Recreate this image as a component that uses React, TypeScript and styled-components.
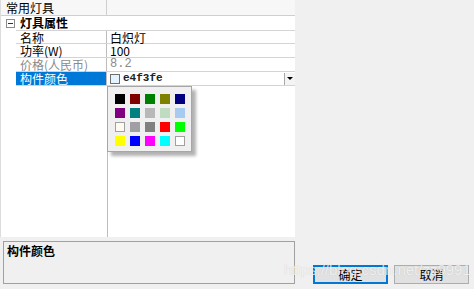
import React from "react";
import styled, { createGlobalStyle } from "styled-components";

const Global = createGlobalStyle`
  html, body { margin: 0; padding: 0; background: #f0f0f0; }
  body { font-family: "Noto Sans CJK SC", "Liberation Sans", sans-serif; font-size: 12px; color: #000; }
`;

const Page = styled.div`
  position: relative;
  width: 474px;
  height: 289px;
  display: flex;
  background: #f0f0f0;
  overflow: hidden;
`;

const LeftColumn = styled.div`
  width: 295px;
  display: flex;
  flex-direction: column;
`;

const Grid = styled.div`
  position: relative;
  height: 237px;
  background: #fff;
  border-left: 1px solid #dcdcdc;
  box-sizing: border-box;
  display: flex;
  flex-direction: column;
`;

const Header = styled.div`
  height: 15px;
  display: flex;
  background: #f7f7f7;
  border-bottom: 1px solid #cfcfcf;
  line-height: 15px;
`;

const HeaderLabel = styled.div`
  width: 106px;
  padding-left: 5px;
  box-sizing: border-box;
  border-right: 1px solid #cfcfcf;
`;

const CategoryRow = styled.div`
  height: 14px;
  display: flex;
  align-items: center;
  font-weight: bold;
  line-height: 14px;
`;

const Toggle = styled.span`
  position: relative;
  box-sizing: border-box;
  width: 9px;
  height: 9px;
  margin: 0 5px 0 5px;
  border: 1px solid #8c8c8c;
  background: #fff;
  &::after {
    content: "";
    position: absolute;
    left: 1px;
    right: 1px;
    top: 3px;
    height: 1px;
    background: #333;
  }
`;

const Row = styled.div`
  height: 14px;
  display: flex;
`;

const Gutter = styled.div`
  width: 15px;
  flex: none;
`;

const Cells = styled.div<{ first?: boolean }>`
  flex: 1;
  display: flex;
  border-bottom: 1px solid #d4d4d4;
  box-sizing: border-box;
  border-top: ${(p) => (p.first ? "1px solid #d4d4d4" : "none")};
`;

const Label = styled.div<{ selected?: boolean; disabled?: boolean }>`
  width: 91px;
  flex: none;
  box-sizing: border-box;
  padding-left: 4px;
  line-height: 13px;
  border-right: 1px solid #bdbdbd;
  background: ${(p) => (p.selected ? "#0078d7" : "transparent")};
  color: ${(p) => (p.selected ? "#fff" : p.disabled ? "#8a8a8a" : "#000")};
  white-space: nowrap;
`;

const Value = styled.div<{ mono?: boolean; disabled?: boolean }>`
  flex: 1;
  display: flex;
  align-items: center;
  padding-left: 3px;
  line-height: 13px;
  font-family: ${(p) => (p.mono ? '"Liberation Mono", monospace' : '"Noto Sans CJK SC", sans-serif')};
  color: ${(p) => (p.disabled ? "#8a8a8a" : "#000")};
`;

const ColorChip = styled.span<{ color: string }>`
  width: 10px;
  height: 10px;
  box-sizing: border-box;
  border: 1px solid #6e6e6e;
  background: ${(p) => p.color};
  margin-right: 3px;
  flex: none;
`;

const HexText = styled.span`
  flex: 1;
  font-family: "Liberation Mono", "DejaVu Sans Mono", monospace;
  font-size: 11px;
  font-weight: bold;
  color: #222;
`;

const DropButton = styled.span`
  width: 11px;
  height: 12px;
  box-sizing: border-box;
  border-left: 1px solid #a8a8a8;
  background: #f4f4f4;
  display: flex;
  align-items: center;
  justify-content: center;
  &::after {
    content: "";
    border-left: 3px solid transparent;
    border-right: 3px solid transparent;
    border-top: 3px solid #000;
  }
`;

const Filler = styled.div`
  flex: 1;
  display: flex;
`;

const FillerLeft = styled.div`
  width: 106px;
  border-right: 1px solid #bdbdbd;
`;

const Popup = styled.div`
  position: absolute;
  left: 106px;
  top: 86px;
  box-sizing: border-box;
  padding: 7px 6px 5px 7px;
  background: #f0f0f0;
  border: 1px solid #a6a6a6;
  box-shadow: 4px 4px 3px rgba(0, 0, 0, 0.3);
  display: grid;
  grid-template-columns: repeat(5, 10px);
  column-gap: 5px;
  row-gap: 4px;
`;

const Swatch = styled.span<{ color: string }>`
  width: 10px;
  height: 10px;
  box-sizing: border-box;
  background: ${(p) => p.color};
  border: 1px solid ${(p) => (p.color === "#ffffff" || p.color === "#fffbf0" ? "#a0a0a0" : p.color)};
`;

const Description = styled.div`
  margin: 4px 0 5px 3px;
  height: 43px;
  box-sizing: border-box;
  border: 1px solid #a0a0a0;
  background: #f0f0f0;
  padding: 2px 3px;
  font-weight: bold;
  line-height: 14px;
`;

const RightColumn = styled.div`
  flex: 1;
  display: flex;
  align-items: flex-end;
  gap: 6px;
  padding: 0 0 5px 18px;
`;

const Button = styled.button<{ primary?: boolean }>`
  width: 75px;
  height: 19px;
  padding: 0;
  box-sizing: border-box;
  font-family: "Noto Sans CJK SC", sans-serif;
  font-size: 12px;
  line-height: 15px;
  color: #000;
  background: #e1e1e1;
  border: 1px solid ${(p) => (p.primary ? "#0078d7" : "#adadad")};
  box-shadow: ${(p) => (p.primary ? "inset 0 0 0 1px #0078d7" : "none")};
`;

const Watermark = styled.div`
  position: absolute;
  left: 284px;
  top: 261px;
  font-family: "Liberation Sans", sans-serif;
  font-size: 15px;
  color: rgba(255, 255, 255, 0.75);
  text-shadow: 0 0 1px rgba(0, 0, 0, 0.18);
  pointer-events: none;
  white-space: nowrap;
`;

const palette = [
  "#000000", "#800000", "#008000", "#808000", "#000080",
  "#800080", "#008080", "#b8b8b8", "#c0dcc0", "#a6caf0",
  "#fffbf0", "#a0a0a4", "#808080", "#ff0000", "#00ff00",
  "#ffff00", "#0000ff", "#ff00ff", "#00ffff", "#ffffff",
];

export default function App() {
  return (
    <Page>
      <Global />
      <LeftColumn>
        <Grid>
          <Header>
            <HeaderLabel>常用灯具</HeaderLabel>
          </Header>
          <CategoryRow>
            <Toggle />
            灯具属性
          </CategoryRow>
          <Row>
            <Gutter />
            <Cells first>
              <Label>名称</Label>
              <Value>白炽灯</Value>
            </Cells>
          </Row>
          <Row>
            <Gutter />
            <Cells>
              <Label>功率(W)</Label>
              <Value>100</Value>
            </Cells>
          </Row>
          <Row>
            <Gutter />
            <Cells>
              <Label disabled>价格(人民币)</Label>
              <Value disabled mono>8.2</Value>
            </Cells>
          </Row>
          <Row>
            <Gutter />
            <Cells>
              <Label selected>构件颜色</Label>
              <Value>
                <ColorChip color="#e4f3fe" />
                <HexText>e4f3fe</HexText>
                <DropButton />
              </Value>
            </Cells>
          </Row>
          <Filler>
            <FillerLeft />
          </Filler>
          <Popup>
            {palette.map((c, i) => (
              <Swatch key={i} color={c} />
            ))}
          </Popup>
        </Grid>
        <Description>构件颜色</Description>
      </LeftColumn>
      <RightColumn>
        <Button primary>确定</Button>
        <Button>取消</Button>
      </RightColumn>
      <Watermark>https://blog.csdn.net/zz9991</Watermark>
    </Page>
  );
}
